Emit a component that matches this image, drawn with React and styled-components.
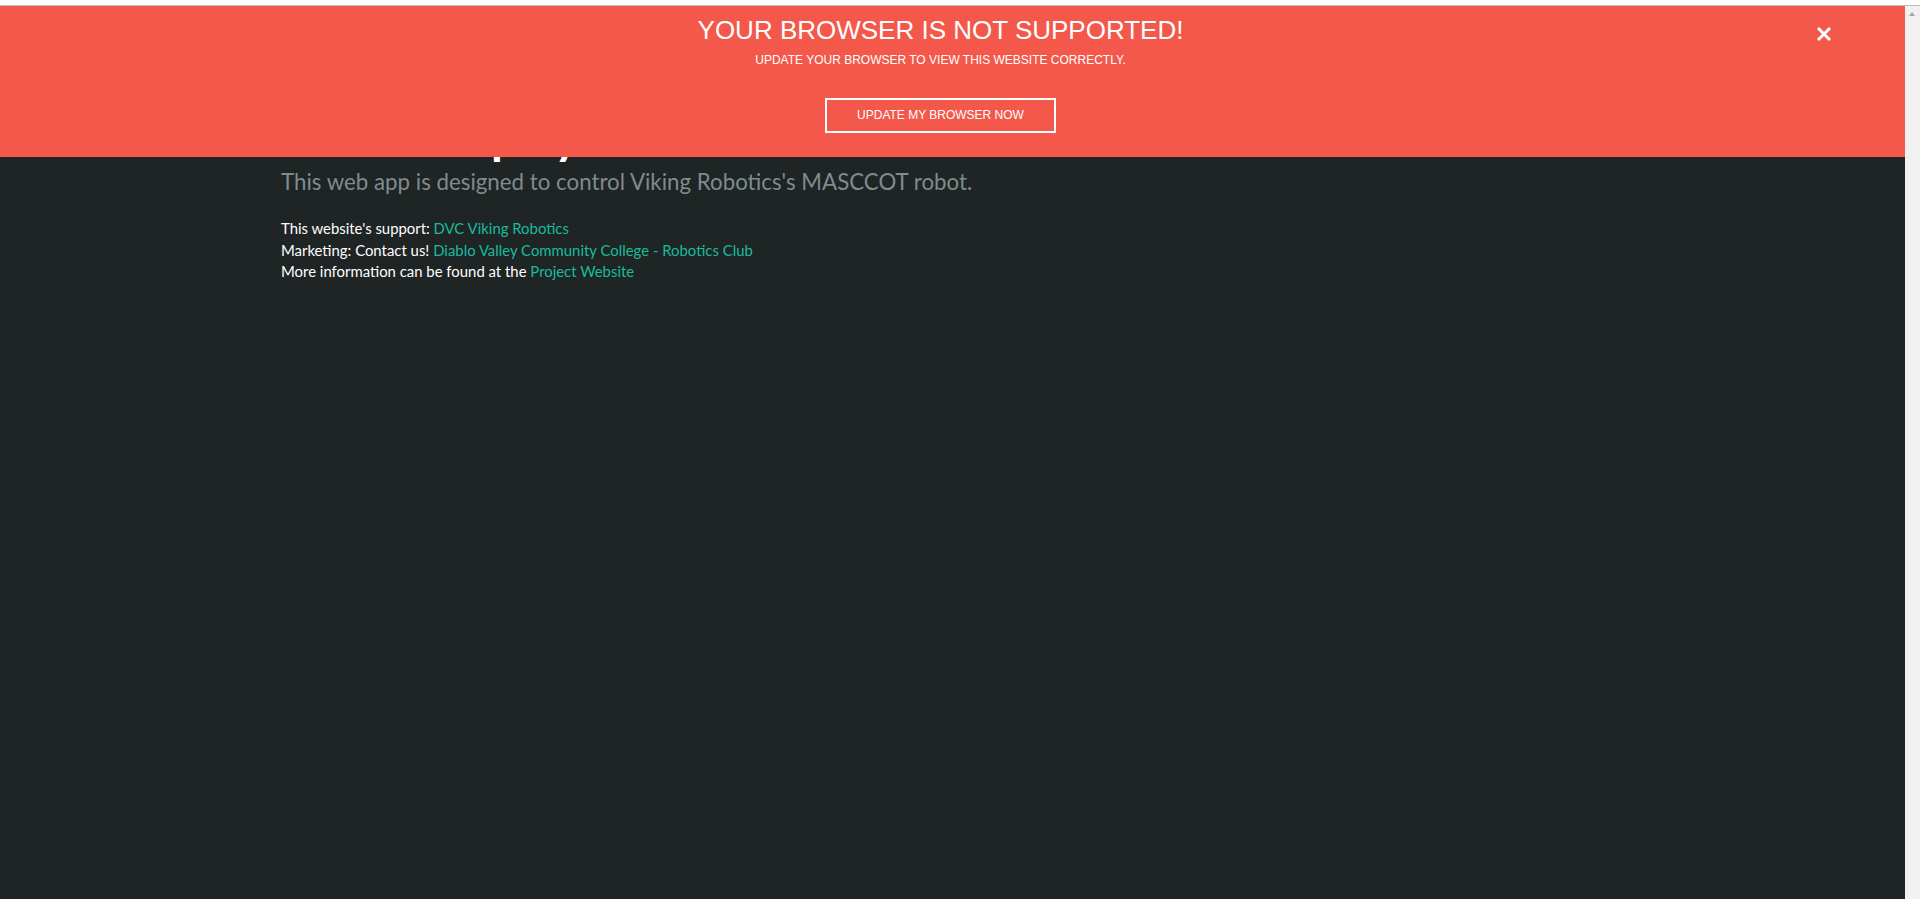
import React from "react";
import styled, { createGlobalStyle } from "styled-components";

const GlobalStyle = createGlobalStyle`
  body {
    margin: 0;
    background: #1f2425;
    color: #fff;
    font-family: Lato, "Open Sans", sans-serif;
    font-size: 15px;
    line-height: 1.45;
  }
  * {
    box-sizing: border-box;
  }
`;

const TopEdge = styled.div`
  height: 6px;
  background: #fff;
  border-bottom: 1px solid #bdbdbd;
`;

const Frame = styled.div`
  display: flex;
  min-height: calc(100vh - 6px);
`;

const Page = styled.div`
  flex: 1;
`;

const ScrollTrack = styled.div`
  width: 15px;
  background: #f1f1f1;
  padding: 6px 0 0 4px;
`;

const ScrollArrow = styled.div`
  width: 0;
  height: 0;
  border-left: 3.5px solid transparent;
  border-right: 3.5px solid transparent;
  border-bottom: 4px solid #a3a3a3;
`;

const Banner = styled.div`
  position: fixed;
  top: 6px;
  left: 0;
  right: 15px;
  z-index: 10;
  background: #f3584a;
  color: #fff;
  font-family: "Liberation Sans", Arial, sans-serif;
  text-align: center;
  padding: 9px 24px 24px 0;
`;

const BannerTitle = styled.div`
  font-size: 26px;
  line-height: 30px;
`;

const BannerText = styled.div`
  margin-top: 7px;
  font-size: 12px;
  line-height: 17px;
`;

const UpdateButton = styled.a`
  display: inline-block;
  margin-top: 29px;
  padding: 8px 30px;
  border: 2px solid #fff;
  color: #fff;
  font-size: 12px;
  line-height: 15px;
  text-decoration: none;
  cursor: pointer;
`;

const CloseButton = styled.button`
  position: absolute;
  top: 20px;
  right: 73px;
  width: 16px;
  height: 16px;
  padding: 0;
  border: 0;
  background: none;
  cursor: pointer;
  svg {
    display: block;
  }
`;

const Main = styled.div`
  padding: 104px 0 0 281px;
`;

const Heading = styled.h1`
  margin: 0 0 3px;
  font-size: 48px;
  font-weight: 700;
  line-height: 1.1;
`;

const Lead = styled.p`
  margin: 0 0 21px;
  font-size: 22.3px;
  line-height: 1.4;
  color: #7f8c8d;
`;

const Info = styled.p`
  margin: 0;
  font-size: 14.9px;
`;

const Link = styled.a`
  color: #18bc9c;
  text-decoration: none;
`;

const App = () => {
  return (
    <>
      <GlobalStyle />
      <TopEdge />
      <Frame>
        <Page>
          <Banner>
            <BannerTitle>YOUR BROWSER IS NOT SUPPORTED!</BannerTitle>
            <BannerText>UPDATE YOUR BROWSER TO VIEW THIS WEBSITE CORRECTLY.</BannerText>
            <UpdateButton>UPDATE MY BROWSER NOW</UpdateButton>
            <CloseButton aria-label="close">
              <svg width="16" height="16" viewBox="0 0 16 16">
                <path d="M2 2 L14 14 M14 2 L2 14" stroke="#fff" strokeWidth="3" />
              </svg>
            </CloseButton>
          </Banner>
          <Main>
            <Heading>Robot Display</Heading>
            <Lead>This web app is designed to control Viking Robotics's MASCCOT robot.</Lead>
            <Info>
              This website's support: <Link href="#">DVC Viking Robotics</Link>
              <br />
              Marketing: Contact us! <Link href="#">Diablo Valley Community College - Robotics Club</Link>
              <br />
              More information can be found at the <Link href="#">Project Website</Link>
            </Info>
          </Main>
        </Page>
        <ScrollTrack>
          <ScrollArrow />
        </ScrollTrack>
      </Frame>
    </>
  );
};

export default App;
